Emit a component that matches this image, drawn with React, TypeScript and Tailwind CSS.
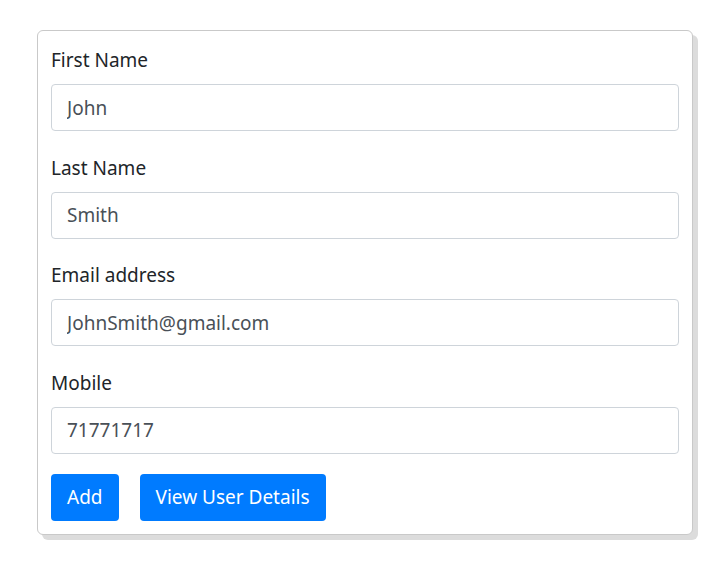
import React, { useState } from 'react';

const fields = [
    { label: 'First Name', value: 'John' },
    { label: 'Last Name', value: 'Smith' },
    { label: 'Email address', value: 'JohnSmith@gmail.com' },
    { label: 'Mobile', value: '71771717' },
];

export default function App() {
    const [values, setValues] = useState(fields.map((f) => f.value));

    return (
        <div className="min-h-screen bg-white pt-[30px] pl-[37px]" style={{ fontFamily: '"Noto Sans", "Open Sans", sans-serif' }}>
            <div className="w-[656px] rounded-[6px] border border-[#c9c9c9] bg-white px-[13px] pt-[15px] pb-[13px] shadow-[5px_5px_0_#dcdcdc]">
                {fields.map((f, i) => (
                    <div key={f.label} className={i === fields.length - 1 ? 'mb-[20px]' : 'mb-[22.5px]'}>
                        <label className="mb-[10px] block text-[19px] leading-[28px] text-[#212529]">{f.label}</label>
                        <input
                            className="block h-[47px] w-full rounded-[4px] border border-[#ced4da] px-[15px] text-[19px] text-[#495057] outline-none"
                            value={values[i]}
                            onChange={(e) => {
                                const next = [...values];
                                next[i] = e.target.value;
                                setValues(next);
                            }}
                        />
                    </div>
                ))}
                <div className="flex gap-[21px]">
                    <button className="h-[47px] rounded-[4px] bg-[#007bff] px-[16px] text-[19px] text-white">Add</button>
                    <button className="h-[47px] rounded-[4px] bg-[#007bff] px-[16px] text-[19px] text-white">View User Details</button>
                </div>
            </div>
        </div>
    );
}
